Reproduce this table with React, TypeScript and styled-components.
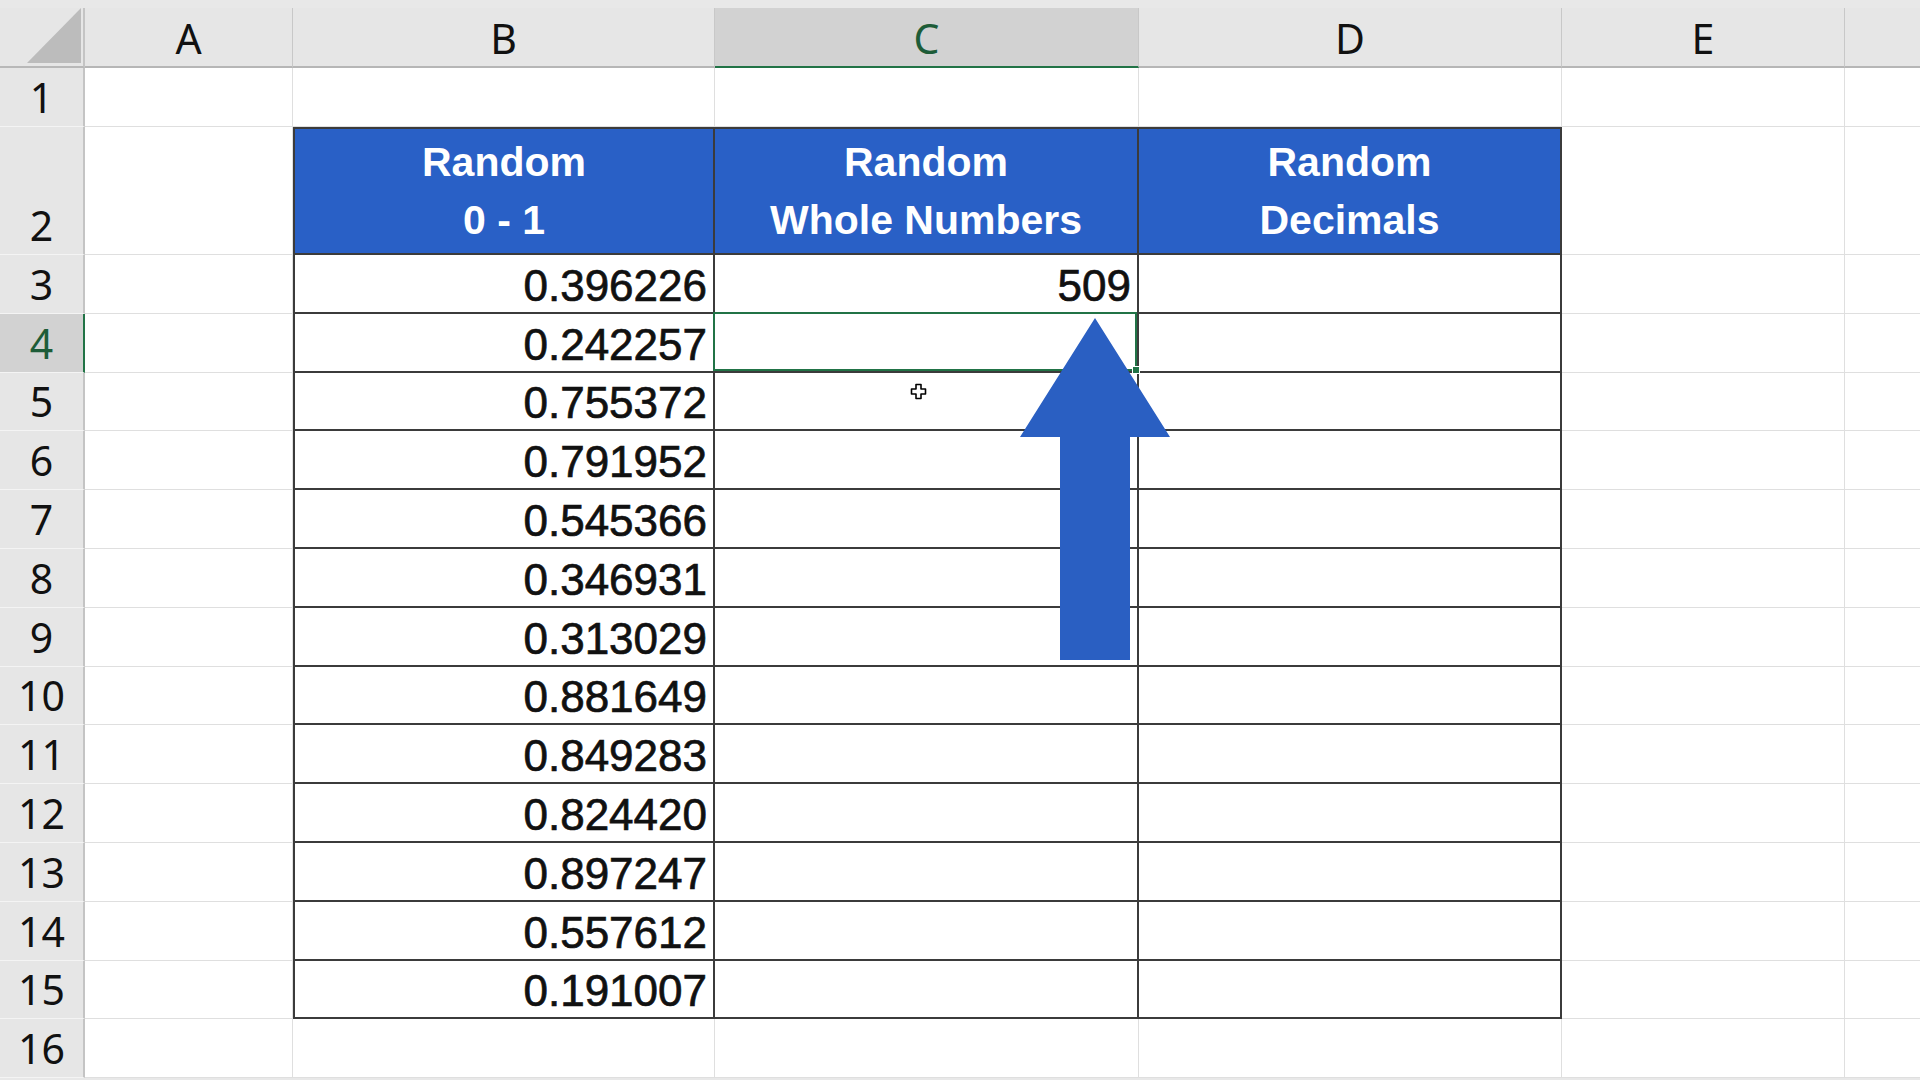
import React from 'react';
import styled, { createGlobalStyle, css } from 'styled-components';

const GRID = '#dfdfdf';
const DARK = '#3b3b3b';
const GREEN = '#217346';
const BLUE = '#2960c6';
const HEAD_BG = '#e6e6e6';
const HEAD_SEL = '#d2d2d2';

const GlobalStyle = createGlobalStyle`
  html, body { margin: 0; padding: 0; overflow: hidden; background: #e8e8e8; }
  * { box-sizing: border-box; }
`;

const Page = styled.div`
  position: relative;
  width: 1920px;
  height: 1080px;
  overflow: hidden;
  padding-top: 8px;
  background: #e8e8e8;
`;

const Sheet = styled.div`
  display: grid;
  grid-template-columns: 85px 208px 422px 424px 423px 283px 283px;
  grid-template-rows: 60px 59px 128px repeat(14, 58.8px);
  width: max-content;
`;

const Corner = styled.div`
  display: flex;
  justify-content: flex-end;
  align-items: flex-end;
  padding: 0 2px 3px 0;
  background: ${HEAD_BG};
  border-right: 2px solid #c4c4c4;
  border-bottom: 2px solid #b8b8b8;
`;

const CornerTriangle = styled.div`
  width: 54px;
  height: 55px;
  background: #bcbcbc;
  clip-path: polygon(100% 0, 100% 100%, 0 100%);
`;

const ColHeader = styled.div<{ $selected?: boolean }>`
  display: flex;
  align-items: center;
  justify-content: center;
  background: ${(p) => (p.$selected ? HEAD_SEL : HEAD_BG)};
  border-right: 1px solid #c8c8c8;
  border-bottom: 2px solid ${(p) => (p.$selected ? GREEN : '#b6b6b6')};
  color: ${(p) => (p.$selected ? '#1d5c38' : '#111')};
  font-family: 'Noto Sans', 'Open Sans', sans-serif;
  font-size: 41px;
  line-height: 1;
  padding-top: 2px;
`;

const RowHeader = styled.div<{ $selected?: boolean }>`
  display: flex;
  align-items: flex-end;
  justify-content: center;
  background: ${(p) => (p.$selected ? HEAD_SEL : HEAD_BG)};
  border-right: 2px solid ${(p) => (p.$selected ? GREEN : '#c4c4c4')};
  border-bottom: 1px solid #f4f4f4;
  color: ${(p) => (p.$selected ? '#1d5c38' : '#111')};
  font-family: 'Noto Sans', 'Open Sans', sans-serif;
  font-size: 41px;
  line-height: 57px;
`;

const Cell = styled.div<{
  $table?: boolean;
  $left?: boolean;
  $top?: boolean;
  $head?: boolean;
}>`
  position: relative;
  display: flex;
  justify-content: flex-end;
  align-items: flex-end;
  background: #fff;
  border-right: 1px solid ${GRID};
  border-bottom: 1px solid ${GRID};
  padding-right: 6px;
  color: #111;
  font-family: 'Liberation Sans', Arial, sans-serif;
  font-size: 44px;
  line-height: 52px;
  white-space: nowrap;
  -webkit-text-stroke: 0.7px #111;

  ${(p) =>
    p.$table &&
    css`
      border-right: 2px solid ${DARK};
      border-bottom: 2px solid ${DARK};
    `}
  ${(p) =>
    p.$left &&
    css`
      border-left: 2px solid ${DARK};
    `}
  ${(p) =>
    p.$top &&
    css`
      border-top: 2px solid ${DARK};
    `}
  ${(p) =>
    p.$head &&
    css`
      flex-direction: column;
      align-items: center;
      justify-content: flex-end;
      padding: 0 0 4px 0;
      background: ${BLUE};
      color: #fff;
      -webkit-text-stroke: 0;
      font-weight: 700;
      font-size: 41px;
      line-height: 58px;
      text-align: center;
    `}
`;

const Selection = styled.div`
  position: absolute;
  top: -2px;
  left: -2px;
  right: 0;
  bottom: 0;
  border: 2px solid ${GREEN};
  z-index: 2;
  pointer-events: none;
`;

const FillHandle = styled.div`
  position: absolute;
  right: -5px;
  bottom: -5px;
  width: 8px;
  height: 8px;
  background: ${GREEN};
  border: 1px solid #fff;
`;

const ArrowShape = styled.svg`
  position: absolute;
  left: 1020px;
  top: 318px;
  width: 150px;
  height: 343px;
  z-index: 5;
`;

const Cursor = styled.svg`
  position: absolute;
  left: 910px;
  top: 383px;
  width: 17px;
  height: 17px;
  z-index: 6;
`;

const columns = ['A', 'B', 'C', 'D', 'E', 'F'];
const headers: Record<string, string[]> = {
  B: ['Random', '0 - 1'],
  C: ['Random', 'Whole Numbers'],
  D: ['Random', 'Decimals'],
};
const values = [
  '0.396226',
  '0.242257',
  '0.755372',
  '0.791952',
  '0.545366',
  '0.346931',
  '0.313029',
  '0.881649',
  '0.849283',
  '0.824420',
  '0.897247',
  '0.557612',
  '0.191007',
];

const SEL_COL = 'C';
const SEL_ROW = 4;

function cellContent(col: string, row: number): React.ReactNode {
  if (row === 2 && headers[col]) {
    return headers[col].map((line) => <span key={line}>{line}</span>);
  }
  if (col === 'B' && row >= 3 && row <= 15) return values[row - 3];
  if (col === 'C' && row === 3) return '509';
  return null;
}

export default function App() {
  const rows = Array.from({ length: 16 }, (_, i) => i + 1);
  return (
    <>
      <GlobalStyle />
      <Page>
        <Sheet>
          <Corner>
            <CornerTriangle />
          </Corner>
          {columns.map((c) => (
            <ColHeader key={c} $selected={c === SEL_COL}>
              {c === 'F' ? '' : c}
            </ColHeader>
          ))}
          {rows.map((r) => (
            <React.Fragment key={r}>
              <RowHeader $selected={r === SEL_ROW}>{r}</RowHeader>
              {columns.map((c) => {
                const inTable = ['B', 'C', 'D'].includes(c) && r >= 2 && r <= 15;
                const selected = c === SEL_COL && r === SEL_ROW;
                return (
                  <Cell
                    key={c}
                    $table={inTable}
                    $left={inTable && c === 'B'}
                    $top={inTable && r === 2}
                    $head={inTable && r === 2}
                  >
                    {cellContent(c, r)}
                    {selected && (
                      <Selection>
                        <FillHandle />
                      </Selection>
                    )}
                  </Cell>
                );
              })}
            </React.Fragment>
          ))}
        </Sheet>
        <ArrowShape viewBox="0 0 150 343">
          <polygon
            points="75,0 150,119 110,119 110,342 40,342 40,119 0,119"
            fill="#2a5fc2"
          />
        </ArrowShape>
        <Cursor viewBox="0 0 17 17">
          <path
            d="M6 1.5 H11 V6 H15.5 V11 H11 V15.5 H6 V11 H1.5 V6 H6 Z"
            fill="#fff"
            stroke="#000"
            strokeWidth="1.6"
            strokeLinejoin="round"
          />
        </Cursor>
      </Page>
    </>
  );
}
